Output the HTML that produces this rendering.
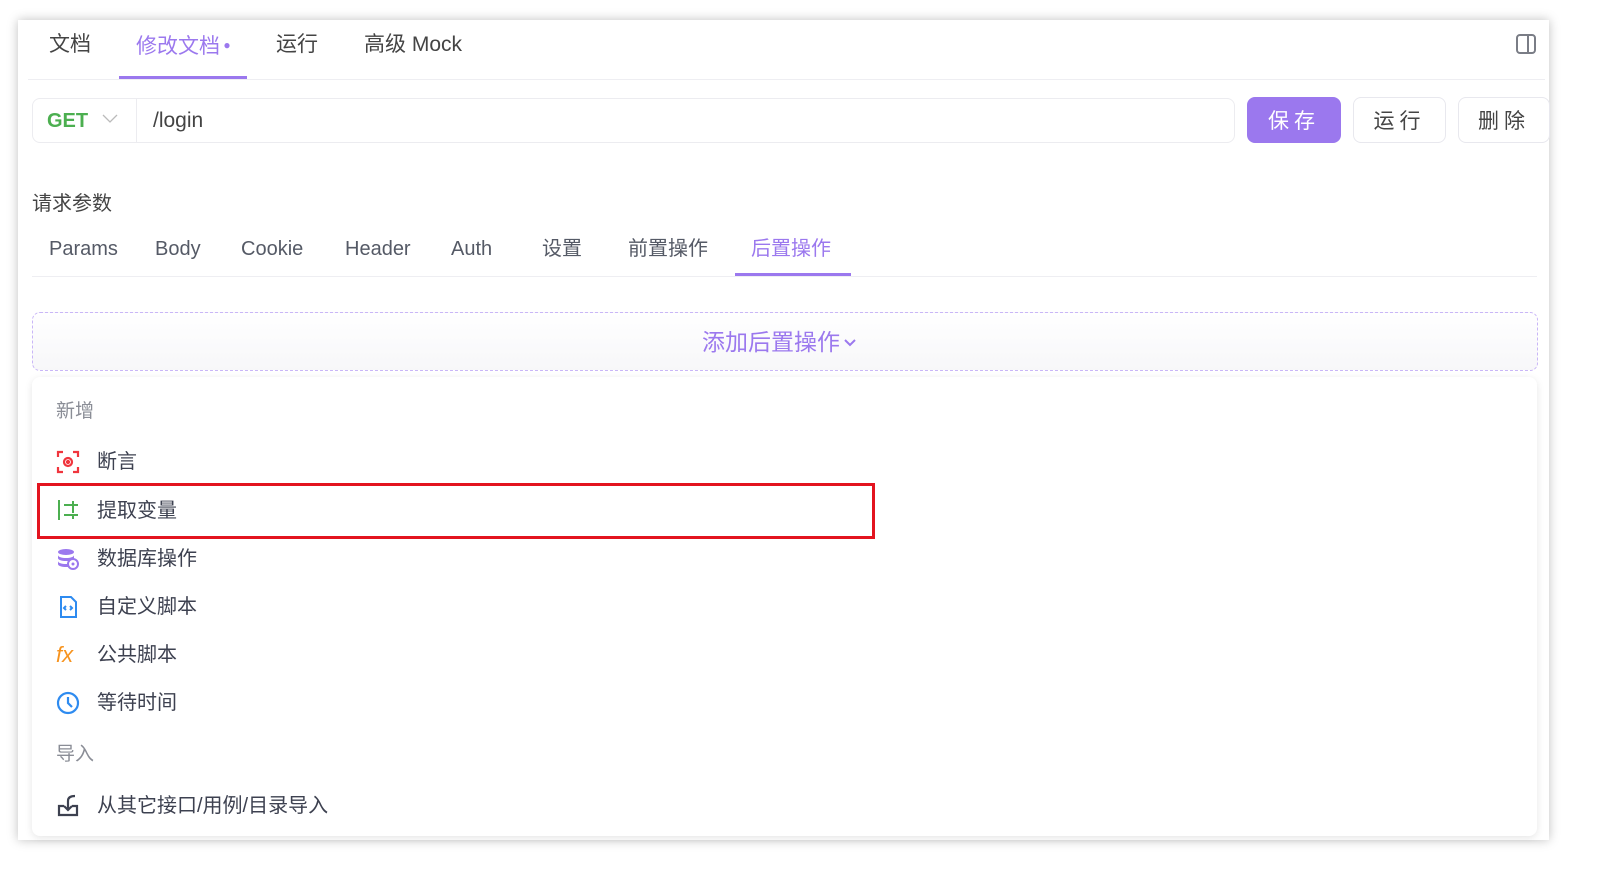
<!DOCTYPE html>
<html><head><meta charset="utf-8">
<style>
*{box-sizing:border-box;margin:0;padding:0}
body{width:1603px;height:881px;background:#fff;font-family:"Liberation Sans","Noto Sans CJK SC",sans-serif;color:#3d4150;position:relative;overflow:hidden}
.card{position:absolute;left:18px;top:20px;width:1531px;height:820px;background:#fff;box-shadow:0 0 10px rgba(0,0,0,.25)}
.abs{position:absolute;white-space:nowrap;line-height:28px}
.tab{font-size:21px;top:31px;color:#444}
.sub{font-size:20px;top:235px;color:#555a66}
.btn{position:absolute;top:97px;height:46px;border:1px solid #e8e8ee;border-radius:8px;font-size:21px;letter-spacing:5px;display:flex;align-items:center;justify-content:center;color:#444}
.item{position:absolute;left:97px;font-size:20px;color:#3d4150;white-space:nowrap;line-height:28px}
.ic{position:absolute;left:56px;width:24px;height:24px}
</style></head><body>
<div class="card"></div>
<div class="abs tab" style="left:49px">文档</div>
<div class="abs tab" style="left:136px;color:#9b78ee">修改文档<span style="font-size:12px;vertical-align:4px"> ●</span></div>
<div class="abs tab" style="left:276px">运行</div>
<div class="abs tab" style="left:364px">高级 Mock</div>
<div class="abs" style="left:28px;top:79px;width:1517px;height:1px;background:#eeeef2"></div>
<div class="abs" style="left:119px;top:76px;width:128px;height:3px;background:#9b78ee"></div>
<svg class="abs" style="left:1515px;top:33px" width="22" height="22" viewBox="0 0 22 22"><rect x="2" y="2" width="18" height="18" rx="3" fill="none" stroke="#7a7d86" stroke-width="2"/><line x1="13" y1="2" x2="13" y2="20" stroke="#7a7d86" stroke-width="2"/></svg>
<div class="abs" style="left:32px;top:98px;width:1203px;height:45px;border:1px solid #ececf0;border-radius:8px"></div>
<div class="abs" style="left:136px;top:99px;width:1px;height:43px;background:#ececf0"></div>
<div class="abs" style="left:47px;top:107px;font-size:20px;font-weight:bold;color:#4caf50">GET</div>
<svg class="abs" style="left:102px;top:114px" width="16" height="10"><path d="M1 1L8 8L15 1" fill="none" stroke="#bbb" stroke-width="1.3"/></svg>
<div class="abs" style="left:153px;top:107px;font-size:21px;color:#444">/login</div>
<div class="btn" style="left:1247px;width:94px;background:#9b78ee;border-color:#9b78ee;color:#fff">保存</div>
<div class="btn" style="left:1353px;width:93px">运行</div>
<div class="btn" style="left:1458px;width:92px">删除</div>
<div class="abs" style="left:32px;top:190px;font-size:20px;color:#444">请求参数</div>
<div class="abs sub" style="left:49px">Params</div>
<div class="abs sub" style="left:155px">Body</div>
<div class="abs sub" style="left:241px">Cookie</div>
<div class="abs sub" style="left:345px">Header</div>
<div class="abs sub" style="left:451px">Auth</div>
<div class="abs sub" style="left:542px">设置</div>
<div class="abs sub" style="left:628px">前置操作</div>
<div class="abs sub" style="left:751px;color:#9b78ee">后置操作</div>
<div class="abs" style="left:32px;top:276px;width:1505px;height:1px;background:#eeeef2"></div>
<div class="abs" style="left:735px;top:273px;width:116px;height:3px;background:#9b78ee"></div>
<div class="abs" style="left:32px;top:312px;width:1506px;height:59px;border:1px dashed #c9b6f7;border-radius:8px;background:linear-gradient(#fff,#f7f7f9)"></div>
<div class="abs" style="left:702px;top:327px;font-size:23px;line-height:30px;color:#9b78ee">添加后置操作<svg width="14" height="10" style="margin-left:3px;vertical-align:2px"><path d="M2 2L7 7L12 2" fill="none" stroke="#9b78ee" stroke-width="2"/></svg></div>
<div class="abs" style="left:32px;top:377px;width:1505px;height:459px;background:#fff;border-radius:8px;box-shadow:0 2px 8px rgba(0,0,0,.1)"></div>
<div class="item" style="top:398px;left:56px;color:#8a8d96;font-size:19px">新增</div>
<svg class="ic" style="top:450px" viewBox="0 0 24 24" fill="none" stroke="#f0353d" stroke-width="2.2"><path d="M2 7V2h5M17 2h5v5M22 17v5h-5M7 22H2v-5"/><circle cx="12" cy="12" r="4"/><circle cx="12" cy="12" r="1" fill="#f0353d"/></svg>
<div class="item" style="top:448px">断言</div>
<svg class="ic" style="top:498px" viewBox="0 0 24 24" fill="none" stroke="#4caf50" stroke-width="2"><path d="M3 2v20M8 7h14M8 17h14M17 3v3M17 8v7M17 18v3"/></svg>
<div class="item" style="top:497px">提取变量</div>
<div class="abs" style="left:37px;top:483px;width:838px;height:56px;border:3px solid #e3141f"></div>
<svg class="ic" style="top:547px" viewBox="0 0 24 24" fill="#9b78ee"><ellipse cx="10" cy="5" rx="8" ry="3"/><path d="M2 8c0 2 4 3 8 3s8-1 8-3v3c0 2-4 3-8 3s-8-1-8-3zM2 14c0 2 4 3 8 3h2v3h-2c-4 0-8-1-8-3z"/><circle cx="17" cy="17" r="5" fill="#fff" stroke="#9b78ee" stroke-width="2"/><circle cx="17" cy="17" r="1.5"/></svg>
<div class="item" style="top:545px">数据库操作</div>
<svg class="ic" style="top:595px" viewBox="0 0 24 24" fill="none" stroke="#2e8bf0" stroke-width="2"><path d="M5 2h10l5 5v15H5z"/><path d="M10 11l-2 2 2 2M14 11l2 2-2 2"/></svg>
<div class="item" style="top:593px">自定义脚本</div>
<div class="abs" style="left:56px;top:641px;font-size:22px;font-style:italic;color:#f7931e">fx</div>
<div class="item" style="top:641px">公共脚本</div>
<svg class="ic" style="top:691px" viewBox="0 0 24 24" fill="none" stroke="#2e8bf0" stroke-width="2.2"><circle cx="12" cy="12" r="10"/><path d="M12 6v6l4 4"/></svg>
<div class="item" style="top:689px">等待时间</div>
<div class="item" style="top:741px;left:56px;color:#8a8d96;font-size:19px">导入</div>
<svg class="ic" style="top:794px" viewBox="0 0 24 24" fill="none" stroke="#3d4150" stroke-width="2.2"><path d="M8 12H3v9h18v-9h-5"/><path d="M12 16V7c0-3 2-5 7-5M8 12l4 4 4-4"/></svg>
<div class="item" style="top:792px">从其它接口/用例/目录导入</div>
</body></html>
